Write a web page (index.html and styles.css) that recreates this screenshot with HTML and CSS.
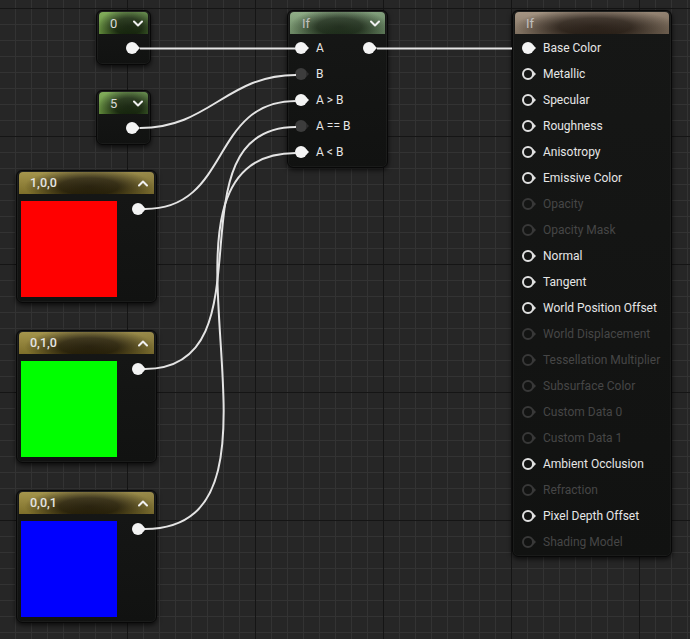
FILE: index.html
```html
<!DOCTYPE html>
<html>
<head>
<meta charset="utf-8">
<link rel="stylesheet" href="styles.css">
</head>
<body>
<div class="graph">
  <div class="node const n-c0">
    <div class="hdr hdr-const"><span class="title">0</span><svg class="chev" width="10" height="7" viewBox="0 0 10 7"><polyline points="1,1.5 5,5.5 9,1.5"/></svg></div>
    <div class="const-body"><span class="pin full"></span></div>
  </div>
  <div class="node const n-c5">
    <div class="hdr hdr-const"><span class="title">5</span><svg class="chev" width="10" height="7" viewBox="0 0 10 7"><polyline points="1,1.5 5,5.5 9,1.5"/></svg></div>
    <div class="const-body"><span class="pin full"></span></div>
  </div>

  <div class="node ifnode">
    <div class="hdr hdr-if"><span class="title dimtitle">If</span><svg class="chev" width="10" height="7" viewBox="0 0 10 7"><polyline points="1,1.5 5,5.5 9,1.5"/></svg></div>
    <div class="rows if-rows">
      <div class="row"><span class="pin full"></span><span class="lbl">A</span><span class="pin full out"></span></div>
      <div class="row"><span class="pin dark"></span><span class="lbl">B</span></div>
      <div class="row"><span class="pin full"></span><span class="lbl">A &gt; B</span></div>
      <div class="row"><span class="pin dark"></span><span class="lbl">A == B</span></div>
      <div class="row"><span class="pin full"></span><span class="lbl">A &lt; B</span></div>
    </div>
  </div>

  <div class="node result">
    <div class="hdr hdr-result"><span class="title dimtitle">If</span></div>
    <div class="rows res-rows">
      <div class="row"><span class="pin full"></span><span class="lbl">Base Color</span></div>
      <div class="row"><span class="pin ring"></span><span class="lbl">Metallic</span></div>
      <div class="row"><span class="pin ring"></span><span class="lbl">Specular</span></div>
      <div class="row"><span class="pin ring"></span><span class="lbl">Roughness</span></div>
      <div class="row"><span class="pin ring"></span><span class="lbl">Anisotropy</span></div>
      <div class="row"><span class="pin ring"></span><span class="lbl">Emissive Color</span></div>
      <div class="row off"><span class="pin ring"></span><span class="lbl">Opacity</span></div>
      <div class="row off"><span class="pin ring"></span><span class="lbl">Opacity Mask</span></div>
      <div class="row"><span class="pin ring"></span><span class="lbl">Normal</span></div>
      <div class="row"><span class="pin ring"></span><span class="lbl">Tangent</span></div>
      <div class="row"><span class="pin ring"></span><span class="lbl">World Position Offset</span></div>
      <div class="row off"><span class="pin ring"></span><span class="lbl">World Displacement</span></div>
      <div class="row off"><span class="pin ring"></span><span class="lbl">Tessellation Multiplier</span></div>
      <div class="row off"><span class="pin ring"></span><span class="lbl">Subsurface Color</span></div>
      <div class="row off"><span class="pin ring"></span><span class="lbl">Custom Data 0</span></div>
      <div class="row off"><span class="pin ring"></span><span class="lbl">Custom Data 1</span></div>
      <div class="row"><span class="pin ring"></span><span class="lbl">Ambient Occlusion</span></div>
      <div class="row off"><span class="pin ring"></span><span class="lbl">Refraction</span></div>
      <div class="row"><span class="pin ring"></span><span class="lbl">Pixel Depth Offset</span></div>
      <div class="row off"><span class="pin ring"></span><span class="lbl">Shading Model</span></div>
    </div>
  </div>

  <div class="node color n-red">
    <div class="hdr hdr-color"><span class="title bold">1,0,0</span><svg class="chev" width="10" height="7" viewBox="0 0 10 7"><polyline points="1,5.5 5,1.5 9,5.5"/></svg></div>
    <div class="color-body"><div class="swatch sw-red"></div><span class="pin full"></span></div>
  </div>
  <div class="node color n-green">
    <div class="hdr hdr-color"><span class="title bold">0,1,0</span><svg class="chev" width="10" height="7" viewBox="0 0 10 7"><polyline points="1,5.5 5,1.5 9,5.5"/></svg></div>
    <div class="color-body"><div class="swatch sw-green"></div><span class="pin full"></span></div>
  </div>
  <div class="node color n-blue">
    <div class="hdr hdr-color"><span class="title bold">0,0,1</span><svg class="chev" width="10" height="7" viewBox="0 0 10 7"><polyline points="1,5.5 5,1.5 9,5.5"/></svg></div>
    <div class="color-body"><div class="swatch sw-blue"></div><span class="pin full"></span></div>
  </div>

  <svg class="wires" width="690" height="639" viewBox="0 0 690 639">
    <path d="M140 48.5 L296 48.5"/>
    <path d="M140 128 C209.7 128 226.3 75 296 75"/>
    <path d="M145 209 C231.3 209 209.7 101 296 101"/>
    <path d="M145 369 C276 369 165 127 296 127"/>
    <path d="M145 529 C320.7 529 120.3 153 296 153"/>
    <path d="M377 48.5 L512 48.5"/>
  </svg>
</div>
</body>
</html>
```

FILE: styles.css
```css
html, body {
  margin: 0;
  padding: 0;
}
body {
  width: 690px;
  height: 639px;
  overflow: hidden;
  background: #262626;
  font-family: Roboto, "Liberation Sans", sans-serif;
}
.graph {
  position: relative;
  width: 690px;
  height: 639px;
  overflow: hidden;
  background-color: #262626;
  background-image:
    linear-gradient(to right, #151515 1px, transparent 1px),
    linear-gradient(to bottom, #151515 1px, transparent 1px),
    linear-gradient(to right, #333333 1px, transparent 1px),
    linear-gradient(to bottom, #333333 1px, transparent 1px);
  background-size: 128px 128px, 128px 128px, 16px 16px, 16px 16px;
  background-position: -1px 0, 0 8px, -1px 0, 0 8px;
}
.node {
  position: absolute;
  box-sizing: border-box;
  border: 1px solid #080808;
  border-radius: 6px;
  padding: 1px 2px 2px;
  background: linear-gradient(to bottom, #161716, #111211);
  box-shadow: 0 2px 5px rgba(0, 0, 0, 0.7), inset 0 0 0 1px rgba(255, 255, 255, 0.04);
  display: flex;
  flex-direction: column;
}
.hdr {
  height: 22px;
  flex: none;
  border-radius: 4px 4px 0 0;
  display: flex;
  align-items: center;
  justify-content: space-between;
  padding: 0 5px 0 11px;
  box-sizing: border-box;
}
.title {
  font-size: 13px;
  color: #dadada;
  line-height: 1;
}
.title.dimtitle {
  color: #c0c0c0;
  font-size: 13px;
}
.title.bold {
  font-weight: 500;
  color: #e4e4e4;
  font-size: 12.5px;
}
.chev {
  display: block;
  fill: none;
  stroke: #f0f0f0;
  stroke-width: 2;
  stroke-linecap: round;
  stroke-linejoin: round;
}
.hdr-const {
  background:
    linear-gradient(to bottom, rgba(255, 255, 255, 0.12), rgba(0, 0, 0, 0.2)),
    radial-gradient(ellipse 62% 85% at 60% 66%, rgba(22, 38, 12, 1) 0%, rgba(22, 38, 12, 0.9) 45%, rgba(22, 38, 12, 0) 100%),
    linear-gradient(to right, #74a646, #5c8c3a 70%, #5a883c);
}
.hdr-if {
  padding-left: 12px;
  background:
    linear-gradient(to bottom, rgba(255, 255, 255, 0.12), rgba(0, 0, 0, 0.18)),
    radial-gradient(ellipse 52% 85% at 52% 66%, rgba(30, 46, 26, 1) 0%, rgba(30, 46, 26, 0.9) 45%, rgba(30, 46, 26, 0) 100%),
    linear-gradient(to right, #82a478, #70926a);
}
.hdr-result {
  background:
    linear-gradient(to bottom, rgba(255, 255, 255, 0.12), rgba(0, 0, 0, 0.18)),
    radial-gradient(ellipse 52% 85% at 52% 66%, rgba(42, 31, 22, 1) 0%, rgba(42, 31, 22, 0.9) 45%, rgba(42, 31, 22, 0) 100%),
    linear-gradient(to right, #9a8874, #84725f);
}
.hdr-color {
  padding-right: 6px;
  background:
    linear-gradient(to bottom, rgba(255, 255, 255, 0.12), rgba(0, 0, 0, 0.18)),
    radial-gradient(ellipse 48% 85% at 52% 66%, rgba(38, 30, 6, 1) 0%, rgba(38, 30, 6, 0.9) 45%, rgba(38, 30, 6, 0) 100%),
    linear-gradient(to right, #9a8834, #8a7a32);
}

.n-c0 { left: 96px; top: 10px; width: 55px; height: 55px; }
.n-c5 { left: 96px; top: 90px; width: 55px; height: 55px; }
.const-body {
  flex: 1;
  display: flex;
  align-items: center;
  justify-content: flex-end;
  padding-right: 10px;
}

.ifnode { left: 287px; top: 10px; width: 101px; height: 158px; }
.result { left: 512px; top: 10px; width: 160px; height: 547px; }

.rows {
  padding-top: 1px;
  display: flex;
  flex-direction: column;
}
.row {
  height: 26px;
  display: flex;
  align-items: center;
}
.if-rows .row { padding-left: 5px; padding-right: 10px; }
.if-rows .lbl { margin-left: 9px; }
.res-rows .row { padding-left: 7px; }
.res-rows .lbl { margin-left: 9px; }
.lbl {
  font-size: 12px;
  color: #e6e6e6;
  white-space: nowrap;
  line-height: 1;
}
.pin.out { margin-left: auto; }
.row.off .lbl { color: #464646; }
.row.off .pin { border-color: #383838; color: #383838; }

.pin {
  position: relative;
  flex: none;
  box-sizing: border-box;
  width: 12px;
  height: 12px;
  border-radius: 50%;
}
.pin::after {
  content: "";
  position: absolute;
  top: 2.5px;
  left: 11px;
  width: 0;
  height: 0;
  border-left: 3px solid currentColor;
  border-top: 3.5px solid transparent;
  border-bottom: 3.5px solid transparent;
}
.pin.full { background: #f4f4f4; color: #f4f4f4; }
.pin.dark { background: #3c3c3c; color: #2e2e2e; }
.pin.ring { width: 12px; height: 12px; border: 2px solid #e0e0e0; color: #e0e0e0; }
.pin.ring::after { top: 0.5px; left: 9px; }

.color { width: 141px; height: 133px; left: 16px; }
.n-red { top: 170px; }
.n-green { top: 330px; }
.n-blue { top: 490px; }
.color-body {
  display: flex;
  align-items: flex-start;
  padding: 7px 0 0 2px;
}
.swatch { width: 96px; height: 96px; flex: none; }
.color-body .pin { margin-left: 15px; margin-top: 2px; }
.sw-red { background: #ff0000; }
.sw-green { background: #00ff00; }
.sw-blue { background: #0000ff; }

.wires {
  position: absolute;
  left: 0;
  top: 0;
  pointer-events: none;
  fill: none;
  stroke: #e4e4e4;
  stroke-width: 2;
}
```
